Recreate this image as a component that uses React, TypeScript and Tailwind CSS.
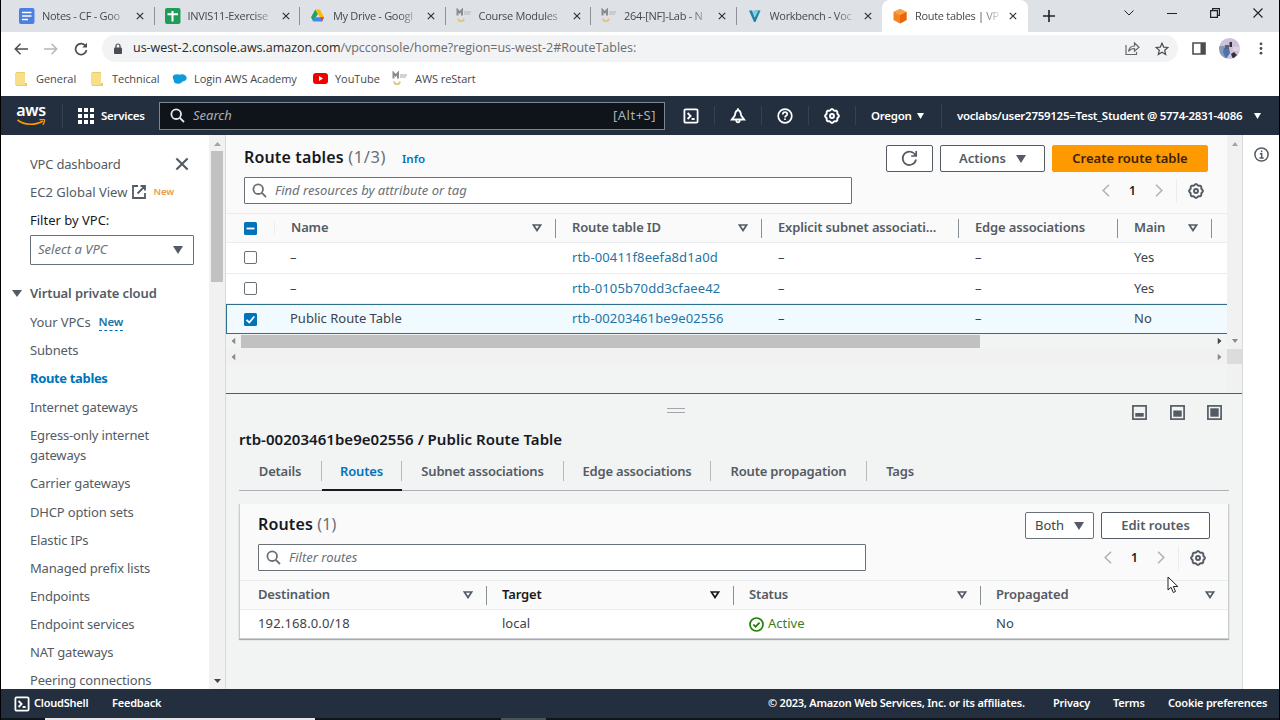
import type { ReactNode } from 'react';
import clsx from 'clsx';

const TABS = [
  { icon: 'docs', title: 'Notes - CF - Goo' },
  { icon: 'sheets', title: 'INVIS11-Exercise' },
  { icon: 'drive', title: 'My Drive - Googl' },
  { icon: 'moodle', title: 'Course Modules' },
  { icon: 'moodle', title: '264-[NF]-Lab - N' },
  { icon: 'vocareum', title: 'Workbench - Voc' },
  { icon: 'cube', title: 'Route tables | VP', active: true },
];

const NAV_ITEMS = [
  'Subnets',
  'Route tables',
  'Internet gateways',
  'Egress-only internet gateways',
  'Carrier gateways',
  'DHCP option sets',
  'Elastic IPs',
  'Managed prefix lists',
  'Endpoints',
  'Endpoint services',
  'NAT gateways',
  'Peering connections',
];

const ROUTE_TABLES = [
  { name: '–', id: 'rtb-00411f8eefa8d1a0d', main: 'Yes' },
  { name: '–', id: 'rtb-0105b70dd3cfaee42', main: 'Yes' },
  { name: 'Public Route Table', id: 'rtb-00203461be9e02556', main: 'No', selected: true },
];

const DETAIL_TABS = [
  { label: 'Details', width: 'w-[83px]' },
  { label: 'Routes', width: 'w-[80px]', active: true },
  { label: 'Subnet associations', width: 'w-[162px]' },
  { label: 'Edge associations', width: 'w-[147px]' },
  { label: 'Route propagation', width: 'w-[156px]' },
  { label: 'Tags', width: 'w-[66px]' },
];

const TABLE_GRID = 'grid grid-cols-[49px_281px_206px_197px_159px_94px_15px]';
const ROUTES_GRID = 'grid grid-cols-[247px_247px_247px_247px]';

// scalloped outline of the settings cog
const COG_PATH =
  Array.from({ length: 64 }, (_, i) => {
    const a = (i / 64) * Math.PI * 2;
    const r = 6.4 + 0.55 * Math.cos(a * 8);
    return `${i ? 'L' : 'M'}${(8 + r * Math.cos(a)).toFixed(2)} ${(8 + r * Math.sin(a)).toFixed(2)}`;
  }).join('') + 'Z';

function Cog() {
  return (
    <svg className="size-4 shrink-0" viewBox="0 0 16 16" fill="none" stroke="currentColor" strokeWidth="1.9">
      <path d={COG_PATH} />
      <circle cx="8" cy="8" r="2" strokeWidth="1.9" />
    </svg>
  );
}

function SearchIcon({ className }: { className?: string }) {
  return (
    <svg className={clsx('size-[15px] shrink-0', className)} viewBox="0 0 15 15" fill="none" stroke="currentColor" strokeWidth="1.8">
      <circle cx="6.2" cy="6.2" r="4.8" />
      <path d="M9.8 9.8 14 14" />
    </svg>
  );
}

function ShellIcon() {
  return (
    <svg className="size-4 shrink-0" viewBox="0 0 16 16" fill="none" stroke="currentColor" strokeWidth="1.8">
      <rect x="1.4" y="1.4" width="13.2" height="13.2" rx="1.2" />
      <path d="m4.6 5 3 3-3 3M8.6 11h3" />
    </svg>
  );
}

function Caret({ className }: { className?: string }) {
  return (
    <svg className={clsx('shrink-0', className)} viewBox="0 0 10 8" fill="currentColor" preserveAspectRatio="none">
      <path d="M0 0h10L5 8z" />
    </svg>
  );
}

function FilterArrow({ className }: { className?: string }) {
  return (
    <svg className={clsx('h-2 w-2.5 shrink-0', className)} viewBox="0 0 10 8" fill="none" stroke="currentColor" strokeWidth="1.7">
      <path d="M1.4 1h7.2L5 6.5z" />
    </svg>
  );
}

function Close({ className }: { className?: string }) {
  return (
    <svg className={clsx('shrink-0', className)} viewBox="0 0 10 10" fill="none" stroke="currentColor" strokeWidth="1.5">
      <path d="m1 1 8 8M9 1 1 9" />
    </svg>
  );
}

function MoodleIcon() {
  return (
    <svg className="size-4 shrink-0" viewBox="0 0 16 16" fill="none">
      <path d="M1.500 7.500V2l2.200 2.500L6 2v5.500" stroke="#8d8d8d" strokeWidth="2" />
      <path d="M8 4h7M8 6h6" stroke="#c4c4c4" strokeWidth="1.300" />
      <path d="M2 10.500c.6 3.500 5.400 3.500 6 0" stroke="#e5c37a" strokeWidth="1.800" />
    </svg>
  );
}

function TabIcon({ name }: { name: string }) {
  if (name === 'docs') {
    return (
      <svg className="size-4 shrink-0" viewBox="0 0 16 16">
        <rect width="15.500" height="16" rx="2" fill="#4b7fe0" />
        <path d="M3 4.500h9.500M3 8h9.500M3 11.500h6" stroke="#fff" strokeWidth="1.6" />
      </svg>
    );
  }
  if (name === 'sheets') {
    return (
      <svg className="size-4 shrink-0" viewBox="0 0 16 16">
        <rect width="15.500" height="16" rx="2" fill="#1f9d58" />
        <path d="M2.500 6.200h10.500M7.500 3v10.500" stroke="#fff" strokeWidth="2" />
      </svg>
    );
  }
  if (name === 'drive') {
    return (
      <svg className="size-4 shrink-0" viewBox="0 0 16 16">
        <path d="M5.300 1.500 1 9.300l2 4L8 6z" fill="#1fa463" />
        <path d="M5.300 1.500h4.600L14 9.300h-4.200z" fill="#fbbc04" />
        <path d="M3 13.500 5.200 9.300H14l-2 4.200z" fill="#4285f4" />
        <path d="M10.300 9.300H14l-2 4.200z" fill="#ea4335" />
      </svg>
    );
  }
  if (name === 'vocareum') {
    return (
      <svg className="size-4 shrink-0" viewBox="0 0 16 16">
        <path d="M2 2.500h3l2.700 7L10.500 4H8V2.500h5.500L8.500 14H7z" fill="#1b87a8" />
        <path d="M5.500 2.500h6L8 9z" fill="#7fd0e2" />
      </svg>
    );
  }
  if (name === 'cube') {
    return (
      <svg className="size-4 shrink-0" viewBox="0 0 16 16">
        <path d="m8 1 6.500 3v8L8 15.500 1.500 12V4z" fill="#f58220" />
        <path d="m8 1 6.500 3L8 7.300 1.500 4z" fill="#fba044" />
        <path d="M8 7.300 14.500 4v8L8 15.500z" fill="#e8660d" />
      </svg>
    );
  }
  return <MoodleIcon />;
}

function BrowserTabs() {
  return (
    <div className="flex h-8 bg-[#dee1e6] pl-[8px]">
      {TABS.map((tab, i) => (
        <div
          key={tab.title}
          className={clsx(
            'flex h-8 w-[145.5px] shrink-0 items-center pl-2.5 text-[#45494d]',
            tab.active && 'rounded-t-lg bg-white',
          )}
        >
          <TabIcon name={tab.icon} />
          <span className="ml-[7px] w-[88px] whitespace-nowrap text-[11px] tracking-[-0.3px] [mask-image:linear-gradient(to_right,#000_75%,transparent)]">
            {tab.title}
          </span>
          <Close className="ml-[6px] size-[8px] text-[#333]" />
          {i < 5 && <span className="ml-auto h-[18px] w-px bg-[#8f9296]" />}
        </div>
      ))}
      <div className="flex flex-1 items-center text-[#222]">
        <svg className="ml-[15px] size-3" viewBox="0 0 12 12" stroke="currentColor" strokeWidth="1.6">
          <path d="M6 0v12M0 6h12" />
        </svg>
        <svg className="mb-1.5 ml-[69px] h-1.5 w-2.5" viewBox="0 0 10 6" fill="none" stroke="currentColor">
          <path d="m.5.5 4.500 4.500L9.500.5" />
        </svg>
        <span className="mb-1.5 ml-[33px] h-px w-2.5 bg-[#222]" />
        <svg className="mb-1.5 ml-[33px] size-2.5" viewBox="0 0 10 10" fill="none" stroke="currentColor" strokeWidth="1.2">
          <path d="M.6 2.600h6.800v6.800H.6zM2.600 2.600V.6h6.800v6.800h-2" />
        </svg>
        <svg className="mb-1.5 ml-[33px] size-2.5" viewBox="0 0 10 10" stroke="currentColor" strokeWidth="1.1">
          <path d="m.5.5 9 9M9.500.5l-9 9" />
        </svg>
      </div>
    </div>
  );
}

function AddressBar() {
  return (
    <div className="flex h-[33px] items-center bg-white pl-[13px] text-[#4a4d51]">
      <svg className="h-3 w-3.5" viewBox="0 0 14 12" fill="none" stroke="currentColor" strokeWidth="1.500">
        <path d="M14 6H1.500M6.500.8 1.300 6l5.200 5.200" />
      </svg>
      <svg className="ml-4 h-3 w-3.5 text-[#b5b7ba]" viewBox="0 0 14 12" fill="none" stroke="currentColor" strokeWidth="1.500">
        <path d="M0 6h12.500M7.500.8 12.700 6l-5.200 5.200" />
      </svg>
      <svg className="ml-4 size-3.5" viewBox="0 0 14 14" fill="none" stroke="currentColor" strokeWidth="1.700">
        <path d="M11.800 4.200A5.500 5.500 0 1 0 12.500 8" />
        <path d="M13 .8V5.500H8.300z" fill="currentColor" stroke="none" />
      </svg>
      <div className="ml-[14px] flex h-[27px] w-[1076px] items-center rounded-full bg-[#f1f3f4] pl-[12px]">
        <svg className="h-3 w-2" viewBox="0 0 8 12">
          <path d="M2 5V3a2 2 0 0 1 4 0v2" fill="none" stroke="currentColor" strokeWidth="1.200" />
          <rect y="4.500" width="8" height="6.500" rx="1" fill="currentColor" />
        </svg>
        <span className="ml-[11px] text-[12.500px] tracking-[-0.02px] text-[#6a6d70]">
          <span className="text-[#26282b]">us-west-2.console.aws.amazon.com</span>
          /vpcconsole/home?region=us-west-2#RouteTables:
        </span>
        <svg className="ml-auto size-[15px] text-[#66696c]" viewBox="0 0 15 15" fill="none" stroke="currentColor" strokeWidth="1.200">
          <path d="M1 4v9.500h10.500V11" />
          <path d="M3.500 10.500C4 7 6 5 9.500 5V2L14 6.200l-4.500 4V7.500c-3 0-4.500.8-6 3z" />
        </svg>
        <svg className="mr-[9px] ml-[15px] size-3.5" viewBox="0 0 14 14" fill="none" stroke="currentColor" strokeWidth="1.200">
          <path d="m7 1.200 1.700 3.900 4.200.4-3.200 2.800 1 4.200L7 10.300l-3.700 2.200 1-4.200L1.100 5.500l4.200-.4z" />
        </svg>
      </div>
      <svg className="ml-[14px] h-[13px] w-3.5" viewBox="0 0 14 13">
        <path d="M1 1h12v11H1z" fill="none" stroke="currentColor" strokeWidth="1.600" />
        <path d="M8.500 1H13v11H8.500z" fill="currentColor" />
      </svg>
      <svg className="ml-[13px] size-[21px]" viewBox="0 0 21 21">
        <clipPath id="avatar">
          <circle cx="10.500" cy="10.500" r="10.500" />
        </clipPath>
        <g clipPath="url(#avatar)">
          <rect width="21" height="21" fill="#cdc3d8" />
          <path d="M0 8h6v13H0z" fill="#8797b5" />
          <path d="M5 10h5l1 5-4 6-3-7z" fill="#4a72b0" />
          <path d="M6 7h4v4H6z" fill="#5c6078" />
          <path d="M10.500 4h2.500v5h-2.500zM12 16l3-2 3 3-4 4z" fill="#3b2c3b" />
          <path d="M14 9h7v4h-7z" fill="#e0d3e0" />
        </g>
      </svg>
      <svg className="ml-[19px] h-[13px] w-1" viewBox="0 0 4 13" fill="currentColor">
        <circle cx="2" cy="1.800" r="1.400" />
        <circle cx="2" cy="6.500" r="1.400" />
        <circle cx="2" cy="11.200" r="1.400" />
      </svg>
    </div>
  );
}

function Folder() {
  return (
    <svg className="h-[14px] w-3" viewBox="0 0 12 14">
      <path d="M1 0h9v11h2v3H1z" fill="#e9cd6a" />
      <path d="M0 1h10v12H0z" fill="#f6df86" />
    </svg>
  );
}

function Bookmark({ icon, label, className }: { icon: ReactNode; label: string; className: string }) {
  return (
    <div className={clsx('flex shrink-0 items-center whitespace-nowrap', className)}>
      {icon}
      <span>{label}</span>
    </div>
  );
}

function Bookmarks() {
  return (
    <div className="flex h-[31px] items-start bg-white pl-[14px] text-[11px] leading-[27px] tracking-[-0.05px] text-[#45494d]">
      <Bookmark className="w-[76px] gap-[9px]" icon={<Folder />} label="General" />
      <Bookmark className="w-[81px] gap-[9px]" icon={<Folder />} label="Technical" />
      <Bookmark
        className="w-[141px] gap-[7px]"
        icon={
          <svg className="h-2.5 w-[15px]" viewBox="0 0 15 10" fill="#109cdb">
            <ellipse cx="5" cy="3.500" rx="4.200" ry="3.300" />
            <ellipse cx="10" cy="4" rx="4.700" ry="3.700" />
            <ellipse cx="6" cy="6.500" rx="4.200" ry="3.300" />
          </svg>
        }
        label="Login AWS Academy"
      />
      <Bookmark
        className="w-[79px] gap-[7px]"
        icon={
          <svg className="h-[11px] w-[15px]" viewBox="0 0 15 11">
            <rect width="15" height="11" rx="3" fill="#f00000" />
            <path d="m6 3 4 2.500L6 8z" fill="#fff" />
          </svg>
        }
        label="YouTube"
      />
      <Bookmark className="gap-[7px]" icon={<MoodleIcon />} label="AWS reStart" />
    </div>
  );
}

function NavIcon({ children }: { children: ReactNode }) {
  return (
    <div className="flex h-[19px] w-[47px] items-center justify-center border-r border-[#37414f] text-white">
      {children}
    </div>
  );
}

function ConsoleNav() {
  return (
    <div className="flex h-[39px] items-center bg-[#232f3e] text-[11.500px] font-semibold tracking-[-0.27px] text-white">
      <div className="ml-[15px] flex w-[30px] flex-col items-center">
        <span className="h-[13px] text-[16px] leading-[8px] tracking-[-0.4px]">aws</span>
        <svg className="h-[7px] w-[29px]" viewBox="0 0 29 7" fill="none" stroke="#ff9900" strokeWidth="1.600">
          <path d="M.5 1c7 5.500 18 5.500 25.500 1" />
          <path d="M22.500.8c2-.6 3.800-.7 5 0 .3 1.500-.6 3.500-1.800 5" strokeWidth="1.300" />
        </svg>
      </div>
      <div className="ml-[16px] h-6 w-px bg-[#37414f]" />
      <svg className="ml-[15px] size-4" viewBox="0 0 16 16" fill="currentColor">
        {[0, 6, 12].map((y) => [0, 6, 12].map((x) => <rect key={`${x}${y}`} x={x} y={y} width="4" height="4" />))}
      </svg>
      <span className="ml-[7px] w-[58px]">Services</span>
      <div className="flex h-[28px] w-[506px] items-center border border-[#7d858e] bg-[#0f141a] pr-2 pl-[10px] text-[13px] font-normal tracking-normal text-[#a9b0b7]">
        <SearchIcon className="text-[#e8e8e8]" />
        <span className="ml-[8px] italic">Search</span>
        <span className="ml-auto tracking-[0.5px]">[Alt+S]</span>
      </div>
      <div className="ml-[3px] flex">
        <NavIcon>
          <ShellIcon />
        </NavIcon>
        <NavIcon>
          <svg className="size-4" viewBox="0 0 16 16" fill="none" stroke="currentColor" strokeWidth="1.800">
            <path d="M8 2.200C5 3 5.300 5.500 4.800 7.500L1.800 11.500h12.400l-3-4C10.700 5.500 11 3 8 2.200zM8 .3v2" />
            <path d="M6.200 12c.3 3.200 3.300 3.200 3.600 0" />
          </svg>
        </NavIcon>
        <NavIcon>
          <svg className="size-4" viewBox="0 0 16 16" fill="none" stroke="currentColor" strokeWidth="1.700">
            <circle cx="8" cy="8" r="6.800" />
            <path d="M5.800 6.400c0-3 4.400-2.800 4.400-.2 0 1.600-2.200 1.500-2.200 3.200M8 10.500v1.500" />
          </svg>
        </NavIcon>
        <NavIcon>
          <Cog />
        </NavIcon>
      </div>
      <span className="ml-[15px] w-[43px]">Oregon</span>
      <Caret className="ml-[3px] h-1.5 w-[7px]" />
      <div className="ml-[17px] h-6 w-px bg-[#37414f]" />
      <span className="ml-[15px] w-[293px] whitespace-nowrap">
        voclabs/user2759125=Test_Student @ 5774-2831-4086
      </span>
      <Caret className="ml-[4px] h-1.5 w-[7px]" />
    </div>
  );
}

function Sidebar() {
  return (
    <div className="flex w-[208px] flex-col overflow-hidden bg-white pt-[19px] pl-[29px] text-[13px] leading-[20.500px] text-[#545b64]">
      <div className="flex items-center justify-between pr-[20px]">
        <span className="tracking-[-0.2px]">VPC dashboard</span>
        <Close className="size-3.5" />
      </div>
      <div className="mt-[7.600px] flex items-center">
        <span>EC2 Global View</span>
        <svg className="ml-[5px] size-3.5" viewBox="0 0 14 14" fill="none" stroke="currentColor" strokeWidth="1.800">
          <path d="M6 1H1v12h12V8M8.500 1H13v4.500M13 1 5.500 8.500" />
        </svg>
        <span className="ml-[7px] text-[9.500px] font-semibold text-[#ec9b4a]">New</span>
      </div>
      <div className="mt-[7.600px] text-[#16191f]">Filter by VPC:</div>
      <div className="mt-[4px] flex h-[30px] w-[164px] shrink-0 items-center justify-between rounded-[1px] border border-[#687078] pr-2.5 pl-[7px]">
        <span className="italic text-[#687078]">Select a VPC</span>
        <Caret className="h-2 w-2.5" />
      </div>
      <div className="mt-[18.500px] -ml-[18px] flex items-center font-semibold">
        <Caret className="mr-2 h-[7px] w-2.5" />
        <span className="tracking-[-0.1px]">Virtual private cloud</span>
      </div>
      <div className="mt-[8.500px] flex items-center">
        <span className="tracking-[-0.1px]">Your VPCs</span>
        <span className="ml-[8px] border-b border-dashed border-[#0073bb] text-[11.500px] leading-4 font-semibold tracking-[-0.2px] text-[#2274a5]">
          New
        </span>
      </div>
      {NAV_ITEMS.map((item) => (
        <div
          key={item}
          className={clsx(
            'mt-[7.650px] w-[150px]',
            item === 'Route tables' ? 'font-bold tracking-[-0.35px] text-[#0073bb]' : 'tracking-[-0.17px]',
          )}
        >
          {item}
        </div>
      ))}
    </div>
  );
}

function Button({ children, className, variant = 'normal' }: { children: ReactNode; className: string; variant?: 'normal' | 'primary' | 'select' }) {
  return (
    <button
      className={clsx(
        'flex h-[27px] items-center justify-center rounded-[2px] border text-[13px]',
        variant === 'normal' && 'border-[#545b64] bg-white font-semibold text-[#545b64]',
        variant === 'primary' && 'border-[#ff9900] bg-[#ff9900] font-semibold text-[#3a2208]',
        variant === 'select' && 'border-[#687078] bg-white text-[#3c434c]',
        className,
      )}
    >
      {children}
    </button>
  );
}

function Pagination() {
  return (
    <div className="flex items-center text-[#545b64]">
      <svg className="h-[13px] w-2 text-[#aab7b8]" viewBox="0 0 8 13" fill="none" stroke="currentColor" strokeWidth="1.600">
        <path d="M7 .8 1.200 6.500 7 12.200" />
      </svg>
      <span className="mx-[19px] w-[7px] text-[12px] font-semibold text-[#16191f]">1</span>
      <svg className="h-[13px] w-2 text-[#aab7b8]" viewBox="0 0 8 13" fill="none" stroke="currentColor" strokeWidth="1.600">
        <path d="m1 .8 5.800 5.700L1 12.200" />
      </svg>
      <span className="mr-[11px] ml-[13px] h-6 w-px bg-[#eaeded]" />
      <Cog />
    </div>
  );
}

function SearchBox({ placeholder }: { placeholder: string }) {
  return (
    <div className="flex h-[27px] w-[608px] items-center rounded-[1px] border border-[#687078] bg-white pl-[7px] text-[13px] italic text-[#687078]">
      <SearchIcon className="mr-[8px]" />
      {placeholder}
    </div>
  );
}

function HeadCell({ label, arrow, dark, sep = true, className }: { label: string; arrow?: boolean; dark?: boolean; sep?: boolean; className?: string }) {
  return (
    <div
      className={clsx(
        'flex items-center font-semibold tracking-[-0.15px]',
        dark ? 'text-[#16191f]' : 'text-[#545b64]',
        className,
      )}
    >
      <span className="whitespace-nowrap">{label}</span>
      {arrow && <FilterArrow className="mr-[13px] ml-auto" />}
      {sep && <span className={clsx('h-[19px] w-px shrink-0 bg-[#879196]', !arrow && 'ml-auto')} />}
    </div>
  );
}

function Checkbox({ state }: { state: 'off' | 'on' | 'mixed' }) {
  if (state === 'off') {
    return <span className="block size-[13px] rounded-[2px] border border-[#687078] bg-white" />;
  }
  return (
    <svg className="size-[13px]" viewBox="0 0 13 13" fill="none" stroke="#fff" strokeWidth="1.800">
      <rect width="13" height="13" rx="1.500" fill="#0073bb" stroke="none" />
      <path d={state === 'on' ? 'm2.500 6.800 2.800 2.700 5-6' : 'M2.500 6.500h8'} />
    </svg>
  );
}

function RouteTables() {
  return (
    <div className="flex h-[259px] border-b border-[#545b64] bg-[#f2f3f3]">
      <div className="w-[1001px]">
        <div className="flex h-[78px] flex-col bg-[#fafafa] pt-[10px] pr-[19px] pl-[18px]">
          <div className="flex h-[27px] items-center">
            <h1 className="-mt-[3px] text-[16px] font-semibold tracking-[0.15px] text-[#16191f]">
              Route tables <span className="text-[16.500px] font-normal tracking-[0.6px] text-[#687078]">(1/3)</span>
            </h1>
            <span className="ml-[16px] text-[11.500px] font-semibold text-[#0073bb]">Info</span>
            <Button className="ml-auto w-[47px]">
              <svg className="size-[17px]" viewBox="0 0 17 17" fill="none" stroke="currentColor" strokeWidth="1.700">
                <path d="M14.500 5.500A6.700 6.700 0 1 0 15 9.500M15.200 1v5h-5" />
              </svg>
            </Button>
            <Button className="ml-[7px] w-[105px]">
              Actions
              <Caret className="ml-2.5 h-2 w-2.5" />
            </Button>
            <Button variant="primary" className="ml-[7px] w-[156px]">
              Create route table
            </Button>
          </div>
          <div className="mt-[5px] flex items-center justify-between pr-1">
            <SearchBox placeholder="Find resources by attribute or tag" />
            <Pagination />
          </div>
        </div>
        <div className={clsx(TABLE_GRID, 'h-[30px] border-y border-[#eaeded] bg-[#fafafa] text-[13px]')}>
          <div className="flex items-center pl-[18px]">
            <Checkbox state="mixed" />
            <span className="ml-auto h-3 w-px bg-[#eaeded]" />
          </div>
          <HeadCell label="Name" arrow className="pl-[16px]" />
          <HeadCell label="Route table ID" arrow className="pl-[16px]" />
          <HeadCell label="Explicit subnet associati..." className="pl-[16px]" />
          <HeadCell label="Edge associations" className="pl-[16px]" />
          <HeadCell label="Main" arrow className="pl-[16px]" />
        </div>
        {ROUTE_TABLES.map((row) => (
          <div
            key={row.id}
            className={clsx(
              TABLE_GRID,
              'items-center text-[13px] text-[#3c434c]',
              row.selected ? 'h-[30px] border-y border-[#2f6f8c] bg-[#f1faff]' : 'h-[30.500px] border-b border-[#eaeded] bg-white',
            )}
          >
            <span className={clsx('flex h-full items-center', row.selected ? 'border-l border-[#2f6f8c] pl-[17px]' : 'pl-[18px]')}>
              <Checkbox state={row.selected ? 'on' : 'off'} />
            </span>
            <span className="pl-[15px]">{row.name}</span>
            <span className="pl-[16px] tracking-[0.12px] text-[#2274a5]">{row.id}</span>
            <span className="pl-[16px]">–</span>
            <span className="pl-[16px]">–</span>
            <span className="pl-[16px]">{row.main}</span>
          </div>
        ))}
        {/* horizontal scrollbars */}
        <div className="flex h-[14px] items-center justify-between pr-1 pl-[4px]">
          <Caret className="h-1 w-[7px] rotate-90 text-[#8a8a8a]" />
          <span className="mr-auto ml-[4px] h-[13px] w-[739px] bg-[#c1c1c1]" />
          <Caret className="h-1 w-[7px] -rotate-90 text-[#444]" />
        </div>
        <div className="mt-[1px] flex h-[15px] items-center justify-between bg-[#f1f1f1] pr-1 pl-[4px]">
          <Caret className="h-1 w-[7px] rotate-90 text-[#8a8a8a]" />
          <Caret className="h-1 w-[7px] -rotate-90 text-[#8a8a8a]" />
        </div>
      </div>
      <div className="flex w-[15px] flex-col items-center bg-[#f1f1f1]">
        <Caret className="mt-[7px] h-1 w-1.5 rotate-180 text-[#a3a3a3]" />
        <Caret className="mt-[193px] h-1 w-1.5 text-[#8a8a8a]" />
        <span className="mt-[6px] h-[15px] w-full bg-[#dcdcdc]" />
      </div>
    </div>
  );
}

function PanelSizeIcon({ top }: { top: number }) {
  return (
    <svg className="size-[15px]" viewBox="0 0 15 15" fill="none">
      <rect x=".9" y=".9" width="13.200" height="13.200" stroke="#545b64" strokeWidth="1.700" />
      <rect x="3.300" y={top} width="8.400" height={11.7 - top} fill="#545b64" />
    </svg>
  );
}

function DetailPanel() {
  return (
    <div className="flex-1 bg-[#f2f3f3] pr-[13px] pl-[13px]">
      <div className="flex h-[37px] items-center">
        <span className="-mt-[4px] ml-[428px] h-[5px] w-[18px] border-y border-[#a3a7ab]" />
        <div className="mr-[7px] ml-auto flex gap-[22.500px]">
          <PanelSizeIcon top={8} />
          <PanelSizeIcon top={5.500} />
          <PanelSizeIcon top={3.300} />
        </div>
      </div>
      <h2 className="h-[30px] text-[15px] leading-[17px] font-semibold tracking-[0.04px] text-[#16191f]">
        rtb-00203461be9e02556 / Public Route Table
      </h2>
      <div className="flex h-[30px] items-start border-b border-[#aab0b5] text-[13px] font-semibold tracking-[-0.2px] text-[#545b64]">
        {DETAIL_TABS.map((tab) => (
          <div
            key={tab.label}
            className={clsx(
              'flex h-[30px] shrink-0 items-start justify-center whitespace-nowrap',
              tab.width,
              tab.active && 'border-b-2 border-[#16191f] text-[#0073bb]',
            )}
          >
            <span className="flex-1 text-center leading-5">{tab.label}</span>
            {tab.label !== 'Tags' && <span className="h-5 w-px bg-[#b5babd]" />}
          </div>
        ))}
      </div>
      <div className="mt-[13px] border-x border-b border-[#c9cdd0] bg-white text-[13px] shadow-[0_1px_1px_#aaa]">
        <div className="flex h-[76px] flex-col bg-[#fafafa] pt-[8px] pr-[18px] pl-[18px]">
          <div className="flex h-[27px] items-center">
            <h2 className="-mt-[3px] text-[16px] font-semibold tracking-[0.15px] text-[#16191f]">
              Routes <span className="font-normal text-[#687078]">(1)</span>
            </h2>
            <Button variant="select" className="ml-auto w-[69px]">
              Both
              <Caret className="ml-2.5 h-2 w-2.5 text-[#545b64]" />
            </Button>
            <Button className="ml-[7px] w-[109px]">Edit routes</Button>
          </div>
          <div className="mt-[5px] flex items-center justify-between pr-1">
            <SearchBox placeholder="Filter routes" />
            <Pagination />
          </div>
        </div>
        <div className={clsx(ROUTES_GRID, 'h-[30px] border-y border-[#eaeded] bg-[#fafafa]')}>
          <HeadCell label="Destination" arrow className="pl-[18px]" />
          <HeadCell label="Target" arrow dark className="pl-[15px]" />
          <HeadCell label="Status" arrow className="pl-[15px]" />
          <HeadCell label="Propagated" arrow sep={false} className="pl-[15px]" />
        </div>
        <div className={clsx(ROUTES_GRID, 'h-[28px] items-center text-[#3c434c]')}>
          <span className="pl-[18px] tracking-[0.15px]">192.168.0.0/18</span>
          <span className="pl-[15px]">local</span>
          <span className="flex items-center gap-1 pl-[15px] text-[#3d7d1f]">
            <svg className="size-[15px]" viewBox="0 0 15 15" fill="none" stroke="#1d8102" strokeWidth="1.700">
              <circle cx="7.500" cy="7.500" r="6.500" />
              <path d="m4.300 7.500 2.300 2.200 4-4" />
            </svg>
            Active
          </span>
          <span className="pl-[15px]">No</span>
        </div>
      </div>
    </div>
  );
}

function Footer() {
  return (
    <div className="flex h-[29px] items-center bg-[#232f3e] pl-[13px] text-[11px] font-semibold tracking-[-0.22px] whitespace-nowrap text-white">
      <ShellIcon />
      <span className="ml-[4px] w-[78px]">CloudShell</span>
      <span>Feedback</span>
      <span className="ml-auto w-[285px]">© 2023, Amazon Web Services, Inc. or its affiliates.</span>
      <span className="w-[60px]">Privacy</span>
      <span className="w-[55px]">Terms</span>
      <span className="w-[111px]">Cookie preferences</span>
    </div>
  );
}

export default function App() {
  return (
    <div className="relative flex h-[720px] w-[1280px] flex-col overflow-hidden border-x border-black bg-white font-['Noto_Sans','Open_Sans',sans-serif]">
      <div className="font-['Open_Sans','Noto_Sans',sans-serif]">
        <BrowserTabs />
        <AddressBar />
        <Bookmarks />
      </div>
      <ConsoleNav />
      <div className="flex h-[554px]">
        <Sidebar />
        <div className="flex w-4 flex-col items-center bg-[#f1f1f1]">
          <Caret className="mt-[7px] h-1 w-[7px] rotate-180 text-[#a3a3a3]" />
          <span className="mt-[5px] h-[131px] w-3 bg-[#c1c1c1]" />
          <Caret className="mt-auto mb-[6px] h-1 w-[7px] text-[#444]" />
        </div>
        <div className="flex w-[1017px] flex-col border-l border-[#d5dbdb]">
          <RouteTables />
          <DetailPanel />
        </div>
        <div className="flex flex-1 justify-center border-l border-[#d5dbdb] bg-white pt-[12px]">
          <svg className="size-[15px] text-[#545b64]" viewBox="0 0 15 15" fill="none" stroke="currentColor" strokeWidth="1.500">
            <circle cx="7.500" cy="7.500" r="6.600" />
            <path d="M5.800 6.800h1.900v4M5.500 11h4.200M7.600 3.500v1.700" />
          </svg>
        </div>
      </div>
      <Footer />
      <div className="flex h-0.5 bg-[#10151b]">
        <span className="ml-[44px] w-[270px] bg-[#e4e6ea]" />
        <span className="ml-[186px] w-[45px] bg-[#4b5158]" />
      </div>
      {/* mouse pointer */}
      <svg className="absolute top-[576px] left-[1166px] h-[18px] w-3" viewBox="0 0 12 18">
        <path d="M1 1v13l3-2.800L6.300 16.500l2.200-1L6.300 10.500H10.800z" fill="#fff" stroke="#222" />
      </svg>
    </div>
  );
}
